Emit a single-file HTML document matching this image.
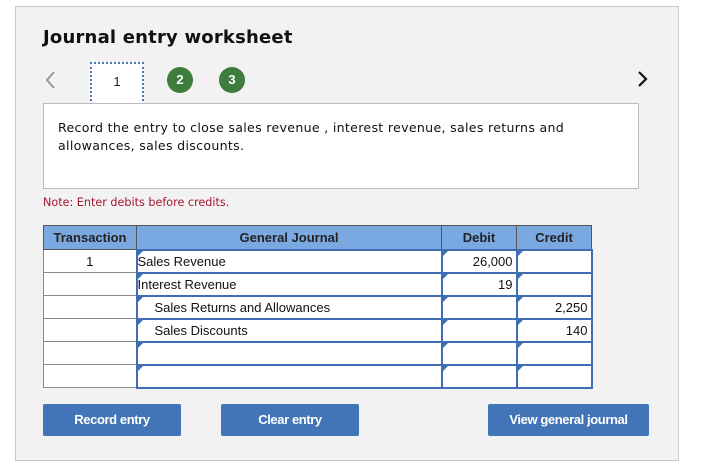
<!DOCTYPE html>
<html><head><style>
*{margin:0;padding:0;box-sizing:border-box}
body{width:717px;height:470px;background:#fff;position:relative;overflow:hidden;font-family:"DejaVu Sans",Verdana,sans-serif}
#panel{position:absolute;left:15px;top:6px;width:664px;height:455px;background:#f2f2f2;border:1px solid #c8c8c8}
.abs{position:absolute}
h1{position:absolute;left:43px;top:27px;font-size:18px;font-weight:bold;color:#111;letter-spacing:0.2px}
.circ{position:absolute;width:26px;height:26px;border-radius:50%;background:#3f7d3c;color:#fff;font:bold 13px "Liberation Sans",Arial,sans-serif;text-align:center;line-height:26px}
#tab1{position:absolute;left:90px;top:62px;width:54px;height:43px;background:#fff;border:2px dotted #4a76b8;border-bottom:none;font:13px "Liberation Sans",Arial,sans-serif;text-align:center;line-height:36px;color:#222}
#box{position:absolute;left:43px;top:103px;width:596px;height:86px;background:#fff;border:1px solid #bdbdbd;padding:15px 14px;font-size:12.6px;letter-spacing:0.3px;line-height:18px;color:#111}
#note{position:absolute;left:43px;top:196px;font-size:11.2px;color:#a3162e}
table{position:absolute;left:43px;top:225px;border-collapse:collapse;font:13px "Liberation Sans",Arial,sans-serif;color:#111}
th{background:#7aa9e2;border:1px solid #555;height:24px;font-weight:bold;color:#222}
td{height:23px;border:1px solid #8a8a8a;background:#fff;position:relative;padding:0}
td.in{border:2px solid #3e6db2}
td.in:before{content:"";position:absolute;left:0;top:0;border-left:5px solid #3e6db2;border-bottom:5px solid transparent}
td.r{text-align:right;padding-right:3px}
td.c{text-align:center}
.ind{padding-left:17px}
.btn{position:absolute;top:404px;height:32px;background:#4275b7;color:#fff;font:bold 13px "Liberation Sans",Arial,sans-serif;text-align:center;line-height:32px;border-radius:2px;letter-spacing:-0.4px}
</style></head><body>
<div id="panel"></div>
<h1>Journal entry worksheet</h1>
<svg class="abs" style="left:44px;top:70px" width="14" height="20"><path d="M10 2 L3 10 L10 18" fill="none" stroke="#999" stroke-width="2"/></svg>
<svg class="abs" style="left:636px;top:70px" width="14" height="18"><path d="M3 2 L10 9 L3 16" fill="none" stroke="#111" stroke-width="2.2"/></svg>
<div id="tab1">1</div>
<div class="circ" style="left:167px;top:67px">2</div>
<div class="circ" style="left:219px;top:67px">3</div>
<div id="box">Record the entry to close sales revenue , interest revenue, sales returns and<br>allowances, sales discounts.</div>
<div id="note">Note: Enter debits before credits.</div>
<table>
<colgroup><col style="width:93px"><col style="width:305px"><col style="width:75px"><col style="width:75px"></colgroup>
<tr><th>Transaction</th><th>General Journal</th><th>Debit</th><th>Credit</th></tr>
<tr><td class="c">1</td><td class="in">Sales Revenue</td><td class="in r">26,000</td><td class="in r"></td></tr>
<tr><td></td><td class="in">Interest Revenue</td><td class="in r">19</td><td class="in r"></td></tr>
<tr><td></td><td class="in ind">Sales Returns and Allowances</td><td class="in r"></td><td class="in r">2,250</td></tr>
<tr><td></td><td class="in ind">Sales Discounts</td><td class="in r"></td><td class="in r">140</td></tr>
<tr><td></td><td class="in"></td><td class="in"></td><td class="in"></td></tr>
<tr><td></td><td class="in"></td><td class="in"></td><td class="in"></td></tr>
</table>
<div class="btn" style="left:43px;width:138px">Record entry</div>
<div class="btn" style="left:221px;width:138px">Clear entry</div>
<div class="btn" style="left:488px;width:161px">View general journal</div>
</body></html>
